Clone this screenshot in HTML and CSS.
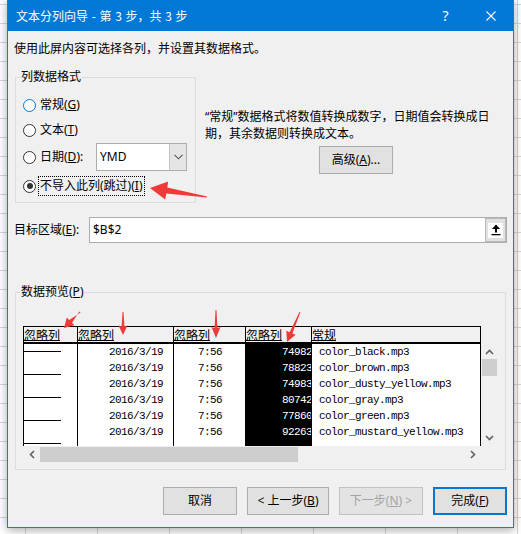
FILE: index.html
```html
<!DOCTYPE html>
<html lang="zh-CN">
<head>
    <meta charset="UTF-8">
    <title>文本分列向导</title>
    <link rel="stylesheet" href="styles.css">
</head>
<body>
<div class="desktop">
    <div class="dialog">
        <div class="titlebar">
            <span class="title">文本分列向导 - 第&nbsp;3&nbsp;步，共&nbsp;3&nbsp;步</span>
            <span class="title-btn help">?</span>
            <span class="title-btn close">
                <svg width="10" height="10" viewBox="0 0 10 10"><path d="M0.5 0.5 L9.5 9.5 M9.5 0.5 L0.5 9.5" stroke="#fff" stroke-width="1.1" fill="none"/></svg>
            </span>
        </div>

        <div class="content">
            <p class="intro">使用此屏内容可选择各列，并设置其数据格式。</p>

            <div class="format-row">
                <div class="group format-group">
                    <span class="legend">列数据格式</span>
                    <div class="radio-list">
                        <div class="radio-row r1"><span class="radio hover"></span><span class="radio-label">常规(<u>G</u>)</span></div>
                        <div class="radio-row r2"><span class="radio"></span><span class="radio-label">文本(<u>T</u>)</span></div>
                        <div class="radio-row r3">
                            <span class="radio"></span><span class="radio-label date-label">日期(<u>D</u>):</span>
                            <div class="select">
                                <span class="select-value">YMD</span>
                                <span class="select-btn">
                                    <svg width="9" height="6" viewBox="0 0 9 6"><path d="M0.5 0.8 L4.5 4.8 L8.5 0.8" stroke="#555" stroke-width="1.1" fill="none"/></svg>
                                </span>
                            </div>
                        </div>
                        <div class="radio-row r4"><span class="radio checked"></span><span class="radio-label focused">不导入此列(跳过)(<u>I</u>)</span></div>
                    </div>
                </div>

                <div class="format-info">
                    <p class="note">“常规”数据格式将数值转换成数字，日期值会转换成日<br>期，其余数据则转换成文本。</p>
                    <div class="note-btn"><button class="btn adv-btn">高级(<u>A</u>)...</button></div>
                </div>
            </div>

            <div class="dest-row">
                <span class="dest-label">目标区域(<u>E</u>):</span>
                <div class="dest-input">
                    <span class="dest-value">$B$2</span>
                    <span class="collapse-btn">
                        <span class="collapse-icon">
                            <svg width="14" height="14" viewBox="0 0 14 14">
                                <path d="M7 1.5 L3 6 L11 6 Z" fill="#000"/>
                                <rect x="6" y="5.5" width="2" height="4" fill="#000"/>
                                <rect x="2.5" y="11" width="9" height="1.3" fill="#000"/>
                            </svg>
                        </span>
                    </span>
                </div>
            </div>

            <div class="group preview-group">
                <span class="legend">数据预览(<u>P</u>)</span>
                <div class="pv">
                    <div class="pv-head">
                        <span class="pv-th">忽略列</span>
                        <span class="pv-th">忽略列</span>
                        <span class="pv-th">忽略列</span>
                        <span class="pv-th">忽略列</span>
                        <span class="pv-th">常规</span>
                    </div>
                    <div class="pv-corner"></div>

                    <div class="pv-body">
                        <div class="pv-col c1">
                            <div class="pv-cell"><i class="dash"></i></div>
                            <div class="pv-cell"><i class="dash"></i></div>
                            <div class="pv-cell"><i class="dash"></i></div>
                            <div class="pv-cell"><i class="dash"></i></div>
                            <div class="pv-cell"><i class="dash"></i></div>
                            <div class="pv-cell"><i class="dash"></i></div>
                        </div>
                        <div class="pv-col c2">
                            <div class="pv-cell">2016/3/19</div>
                            <div class="pv-cell">2016/3/19</div>
                            <div class="pv-cell">2016/3/19</div>
                            <div class="pv-cell">2016/3/19</div>
                            <div class="pv-cell">2016/3/19</div>
                            <div class="pv-cell">2016/3/19</div>
                        </div>
                        <div class="pv-col c3">
                            <div class="pv-cell">7:56</div>
                            <div class="pv-cell">7:56</div>
                            <div class="pv-cell">7:56</div>
                            <div class="pv-cell">7:56</div>
                            <div class="pv-cell">7:56</div>
                            <div class="pv-cell">7:56</div>
                        </div>
                        <div class="pv-col c4">
                            <div class="pv-cell">749823</div>
                            <div class="pv-cell">788235</div>
                            <div class="pv-cell">749835</div>
                            <div class="pv-cell">807426</div>
                            <div class="pv-cell">778600</div>
                            <div class="pv-cell">922635</div>
                        </div>
                        <div class="pv-col c5">
                            <div class="pv-cell">color_black.mp3</div>
                            <div class="pv-cell">color_brown.mp3</div>
                            <div class="pv-cell">color_dusty_yellow.mp3</div>
                            <div class="pv-cell">color_gray.mp3</div>
                            <div class="pv-cell">color_green.mp3</div>
                            <div class="pv-cell">color_mustard_yellow.mp3</div>
                        </div>
                    </div>

                    <div class="vscroll">
                        <span class="sb-btn sb-up"><svg width="9" height="6" viewBox="0 0 9 6"><path d="M1 5 L4.5 1.5 L8 5" stroke="#606060" stroke-width="1.6" fill="none"/></svg></span>
                        <span class="sb-thumb-v"></span>
                        <span class="sb-fill"></span>
                        <span class="sb-btn sb-down"><svg width="9" height="6" viewBox="0 0 9 6"><path d="M1 1 L4.5 4.5 L8 1" stroke="#606060" stroke-width="1.6" fill="none"/></svg></span>
                    </div>

                    <div class="hscroll">
                        <span class="sb-btn sb-left"><svg width="6" height="9" viewBox="0 0 6 9"><path d="M5 1 L1.5 4.5 L5 8" stroke="#606060" stroke-width="1.6" fill="none"/></svg></span>
                        <span class="sb-thumb-h"></span>
                        <span class="sb-fill"></span>
                        <span class="sb-btn sb-right"><svg width="6" height="9" viewBox="0 0 6 9"><path d="M1 1 L4.5 4.5 L1 8" stroke="#606060" stroke-width="1.6" fill="none"/></svg></span>
                    </div>
                </div>
            </div>

            <div class="buttons">
                <button class="btn w74">取消</button>
                <button class="btn w82">&lt; 上一步(<u>B</u>)</button>
                <button class="btn w84 disabled">下一步(<u>N</u>) &gt;</button>
                <button class="btn w74 default">完成(<u>F</u>)</button>
            </div>
        </div>
    </div>

    <!-- red annotation arrows drawn over the screenshot -->
    <svg class="marks" width="521" height="534" viewBox="0 0 521 534">
        <g fill="#f03a3a">
            <polygon points="150,188 168.2,181.4 167.3,187.4 207.1,196.4 206.9,197.6 166.3,193.4 165.2,199.6"/>
            <polygon points="64,328 66.8,317.6 69.2,320 80.6,312.6 79.4,311.4 72,322.8 74.4,325.2"/>
            <polygon points="123,335 118.5,325.5 121.6,326.5 122.5,312 123.5,312 124.4,326.5 127.5,325.5"/>
            <polygon points="216,338 211.5,327 214.6,328 215.5,310 216.5,310 217.4,328 220.5,327"/>
            <polygon points="287,342 286.3,330.8 289.6,332.2 299.6,311.8 300.4,312.2 292.4,333.4 295.6,334.8"/>
        </g>
    </svg>
</div>
</body>
</html>
```

FILE: styles.css
```css
* { box-sizing: border-box; }
body { margin: 0; font: 12px/16px "Noto Sans", "Noto Sans CJK SC", sans-serif; color: #000; }
p { margin: 0; }
u { text-underline-offset: 1px; }

/* spreadsheet behind the dialog */
.desktop {
    position: relative;
    width: 521px; height: 534px; overflow: hidden;
    padding-left: 7px;
    background-color: #fff;
    background-image:
        linear-gradient(#d6d6d6 1px, transparent 1px),
        linear-gradient(90deg, #d6d6d6 1px, transparent 1px),
        linear-gradient(90deg, transparent 517px, #d6d6d6 517px, #d6d6d6 518px, transparent 518px);
    background-size: 100% 19px, 72px 100%, 100% 100%;
    background-position: 0 4px, 25px 0, 0 0;
}

.dialog {
    width: 507px; height: 528px;
    background: #f0f0f0;
    border: 1px solid #1a79d2; border-top: 0;
    box-shadow: 0 2px 9px rgba(0,0,0,.35);
    display: flex; flex-direction: column;
}

.titlebar { height: 31px; flex: none; background: #0078d7; color: #fff; display: flex; align-items: center; padding-left: 8px; }
.titlebar .title { flex: 1; font-family: "Noto Sans CJK SC", sans-serif; word-spacing: 1px; }
.title-btn { width: 45px; height: 31px; display: flex; align-items: center; justify-content: center; }
.help { font-size: 14px; }

.content { flex: 1; padding: 10px 6px 0 6px; }
.intro { line-height: 16px; }

.group { border: 1px solid #dcdcdc; margin-left: 1px; }
.legend { display: block; width: fit-content; margin: -8px 0 0 4px; padding: 0 1px; background: #f0f0f0; line-height: 14px; }

.format-row { display: flex; margin-top: 20px; }
.format-group { width: 181px; height: 126px; }
.radio-list { padding-left: 7px; margin-top: 11px; }
.radio-row { display: flex; align-items: center; height: 20px; }
.radio-row.r2 { margin-top: 5px; }
.radio-row.r3 { margin-top: 3px; height: 28px; }
.radio-row.r4 { margin-top: 5px; }
.radio { width: 13px; height: 13px; border: 1px solid #333; border-radius: 50%; background: #fff; margin-right: 2px; flex: none; position: relative; }
.radio.hover { border-color: #0078d7; }
.radio.checked::after { content: ""; position: absolute; left: 2.5px; top: 2.5px; width: 6px; height: 6px; border-radius: 50%; background: #333; }
.radio-label { border: 1px dotted transparent; padding: 1px; line-height: 16px; white-space: nowrap; }
.radio-label.focused { border-color: #000; }
.date-label { width: 54px; }

.select { width: 91px; height: 28px; margin-left: 4px; border: 1px solid #adadad; background: #fff; display: flex; }
.select-value { flex: 1; padding-left: 3px; line-height: 26px; }
.select-btn { width: 17px; background: #e5e5e5; border-left: 1px solid #c4c4c4; display: flex; align-items: center; justify-content: center; }

.format-info { flex: 1; margin-left: 9px; padding-top: 31px; }
.note { line-height: 17px; white-space: nowrap; }
.note-btn { text-align: center; margin-top: 4px; }

.btn { height: 28px; padding: 0; font: inherit; color: #000; background: #e1e1e1; border: 1px solid #adadad; }
.adv-btn { width: 74px; }
.btn.default { border: 2px solid #0078d7; }
.btn.disabled { color: #a3a3a3; border-color: #c2c2c2; background: #e3e3e3; }
.w74 { width: 74px; }
.w82 { width: 82px; }
.w84 { width: 84px; }

.dest-row { display: flex; align-items: center; margin-top: 14px; height: 26px; }
.dest-label { width: 75px; }
.dest-input { flex: 1; height: 26px; border: 1px solid #adadad; background: #fff; display: flex; }
.dest-value { flex: 1; padding-left: 3px; line-height: 24px; }
.collapse-btn { width: 21px; background: #e1e1e1; border: 1px solid #b9b9b9; display: flex; align-items: center; justify-content: center; }
.collapse-icon { width: 15px; height: 15px; background: #fff; display: flex; align-items: center; justify-content: center; }

.preview-group { margin-top: 49px; width: 491px; height: 178px; }

.pv { display: grid; grid-template-columns: 458px 16px; grid-template-rows: 18px 102px 16px; margin: 27px 0 0 7px; }
.pv-head, .pv-body { display: grid; grid-template-columns: 54px 96px 72px 66px 170px; }
.pv-head { border-top: 1px solid #000; border-bottom: 2px solid #000; background: #f0f0f0; }
.pv-th { border-left: 1px solid #000; font-family: "Noto Sans CJK SC", sans-serif; line-height: 15px; text-decoration: underline; text-underline-offset: 0; white-space: nowrap; overflow: hidden; }
.pv-th:last-child, .pv-col:last-child { border-right: 1px solid #000; }

/* fixed-width preview text, 6px per character */
.pv-col { border-left: 1px solid #000; background: #fff; overflow: hidden; font: 11px/16px "Liberation Mono", monospace; letter-spacing: -0.6px; white-space: nowrap; }
.pv-cell { height: 16px; }
.c1 .dash { display: block; width: 37px; height: 1px; background: #000; margin-top: 7px; }
.c2 { text-align: right; padding-right: 10px; }
.c3 { text-align: right; padding-right: 23px; }
.c4 { background: #000; color: #fff; padding-left: 36px; }
.c5 { padding-left: 7px; }

.vscroll { display: flex; flex-direction: column; background: #f0f0f0; }
.hscroll { display: flex; background: #f0f0f0; }
.sb-btn { display: flex; align-items: center; justify-content: center; flex: none; }
.sb-up { height: 15px; }
.sb-down { height: 16px; }
.sb-left, .sb-right { width: 17px; }
.sb-fill { flex: 1; }
.sb-thumb-v { height: 17px; margin-left: 1px; background: #cdcdcd; }
.sb-thumb-h { width: 258px; margin-top: 1px; background: #cdcdcd; }

.buttons { display: flex; justify-content: flex-end; gap: 10px; margin-top: 17px; }

.marks { position: absolute; left: 0; top: 0; pointer-events: none; }
```
